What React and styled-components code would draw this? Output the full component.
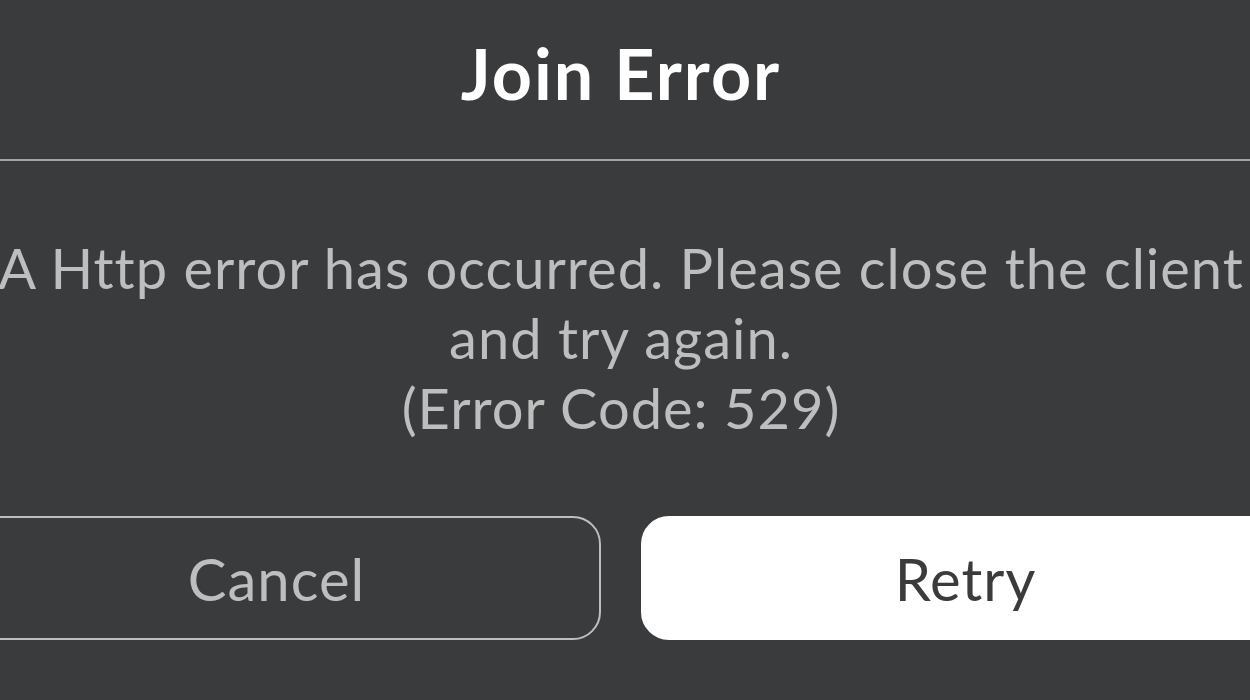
import React from "react";
import styled, { createGlobalStyle } from "styled-components";

const GlobalStyle = createGlobalStyle`
  html, body {
    margin: 0;
    padding: 0;
    background: #393b3d;
    overflow: hidden;
  }
  body {
    font-family: Lato, "Open Sans", sans-serif;
    font-variant-ligatures: none;
  }
`;

const Screen = styled.div`
  width: 1250px;
  height: 700px;
  overflow: hidden;
  background: #393b3d;
`;

const Dialog = styled.div`
  width: 1338px;
  margin-left: -48px;
  display: flex;
  flex-direction: column;
`;

const TitleBar = styled.div`
  height: 161px;
  display: flex;
  align-items: center;
  justify-content: center;
  border-bottom: 2px solid #a3a4a5;
  box-sizing: border-box;
  padding-bottom: 14px;
`;

const Title = styled.h1`
  margin: 0;
  font-size: 70px;
  font-weight: 700;
  letter-spacing: 2px;
  color: #ffffff;
  line-height: 1;
`;

const Message = styled.p`
  margin: 0;
  padding-top: 72px;
  height: 355px;
  box-sizing: border-box;
  text-align: center;
  font-size: 56px;
  letter-spacing: 1px;
  line-height: 70px;
  color: #bdbebe;
`;

const Actions = styled.div`
  display: flex;
  gap: 40px;
`;

const ActionButton = styled.button`
  flex: 1;
  height: 124px;
  border-radius: 28px;
  box-sizing: border-box;
  font-family: inherit;
  font-variant-ligatures: none;
  font-size: 58px;
  letter-spacing: 1px;
  border: 2px solid ${p => (p.$primary ? "#ffffff" : "#bdbebe")};
  background: ${p => (p.$primary ? "#ffffff" : "transparent")};
  color: ${p => (p.$primary ? "#393b3d" : "#bdbebe")};
  cursor: pointer;
`;

export default function App() {
  return (
    <>
      <GlobalStyle />
      <Screen>
        <Dialog>
          <TitleBar>
            <Title>Join Error</Title>
          </TitleBar>
          <Message>
            A Http error has occurred. Please close the client
            <br />
            and try again.
            <br />
            (Error Code: 529)
          </Message>
          <Actions>
            <ActionButton>Cancel</ActionButton>
            <ActionButton $primary>Retry</ActionButton>
          </Actions>
        </Dialog>
      </Screen>
    </>
  );
}
